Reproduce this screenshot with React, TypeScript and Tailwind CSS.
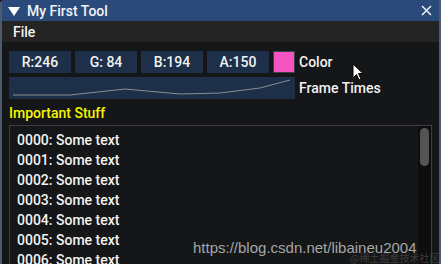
const rows = Array.from({ length: 7 }, (_, i) => `${String(i).padStart(4, "0")}: Some text`);

const channels = ["R:246", "G: 84", "B:194", "A:150"];

export default function App() {
  return (
    <div
      className="relative h-[264px] w-[441px] overflow-hidden bg-[#0b0b0c] text-[14px] font-medium text-[#f2f2f2]"
      style={{ fontFamily: "Roboto, 'Liberation Sans', sans-serif" }}
    >
      <div className="flex h-full flex-col overflow-hidden rounded-tl-[4px] border-x-2 border-[#4e5a6e] bg-[#151618]">
        {/* title bar */}
        <div className="flex h-[21px] shrink-0 items-center bg-[#294a7a] pl-[5px] pr-[7px]">
          <svg width="14" height="12" viewBox="0 0 14 12" className="mr-[6px]">
            <polygon points="1,2 13,2 7,11" fill="#ffffff" />
          </svg>
          <span className="text-[14px] leading-none">My First Tool</span>
          <svg width="11" height="11" viewBox="0 0 11 11" className="ml-auto">
            <path d="M1 1 L10 10 M10 1 L1 10" stroke="#ffffff" strokeWidth="1.4" />
          </svg>
        </div>
        {/* menu bar */}
        <div className="flex h-[21px] shrink-0 items-center bg-[#242424] pl-[11px]">
          <span className="leading-none">File</span>
        </div>

        <div className="flex shrink-0 flex-col px-[7px] pt-[9px]">
          <div className="flex h-[22px] shrink-0 items-center gap-[4px]">
            {channels.map((c) => (
              <div key={c} className="flex h-[22px] w-[62px] items-center justify-center bg-[#1d2f49] leading-none">
                {c}
              </div>
            ))}
            <div className="h-[22px] w-[22px] border border-[#3a3f4a] bg-[#f654c2]" />
            <span className="leading-none">Color</span>
          </div>
          <div className="mt-[4px] flex h-[22px] shrink-0 items-center gap-[4px]">
            <div className="h-[22px] w-[286px] bg-[#1d2f49]">
              <svg width="286" height="22" viewBox="0 0 286 22">
                <polyline
                  points="4,18 61,18 116,12 171,17 211,16 251,11 281,3"
                  fill="none"
                  stroke="#8a8d92"
                  strokeWidth="1"
                />
              </svg>
            </div>
            <span className="leading-none">Frame Times</span>
          </div>
          <div className="mt-[4px] h-[20px] shrink-0 leading-[20px] text-[#f5f500]">Important Stuff</div>

          <div className="mt-[2px] flex h-[160px] shrink-0 border border-[#3e3e44]">
            <div className="flex flex-1 flex-col pl-[7px] pt-[4px]">
              {rows.map((r) => (
                <div key={r} className="h-[20px] shrink-0 leading-[20px]">
                  {r}
                </div>
              ))}
            </div>
            <div className="w-[13px] bg-[#0e0e0f] pt-[2px]">
              <div className="mx-auto h-[38px] w-[9px] rounded-full bg-[#545454]" />
            </div>
          </div>
        </div>
      </div>

      {/* watermark */}
      <div
        className="absolute left-[193px] top-[237px] text-[15px] font-normal text-[#a6a6a6]"
        style={{ fontFamily: "'Liberation Sans', sans-serif" }}
      >
        https://blog.csdn.net/libaineu2004
      </div>
      <div
        className="absolute left-[350px] top-[250px] text-[10px] font-normal text-[#3c3c3c]"
        style={{ fontFamily: "'Noto Sans CJK SC', sans-serif" }}
      >
        @稀土掘金技术社区
      </div>

      {/* cursor */}
      <svg width="12" height="19" viewBox="0 0 12 19" className="absolute left-[352px] top-[63px]">
        <path d="M1 1 L1 15 L4.5 11.5 L7 17 L9 16 L6.5 10.5 L11 10.5 Z" fill="#ffffff" stroke="#000000" strokeWidth="1" />
      </svg>
    </div>
  );
}
